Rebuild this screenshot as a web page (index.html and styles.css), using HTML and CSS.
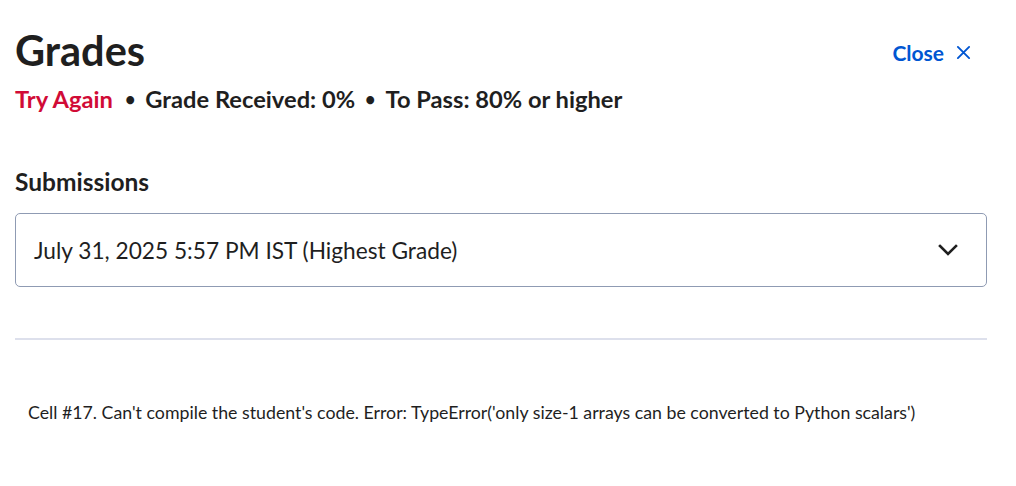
FILE: index.html
```html
<!DOCTYPE html>
<html>
<head>
<meta charset="utf-8">
<link rel="stylesheet" href="styles.css">
</head>
<body>
<div class="panel">
  <div class="header">
    <div>
      <h1 class="title">Grades</h1>
      <div class="status">
        <span class="fail">Try Again</span>
        <span class="dot">•</span>
        <span>Grade Received: 0%</span>
        <span class="dot">•</span>
        <span>To Pass: 80% or higher</span>
      </div>
    </div>
    <button class="close">Close
      <svg width="16" height="16" viewBox="0 0 16 16"><path d="M2 2 L14 14 M14 2 L2 14" stroke="#0056d2" stroke-width="2" fill="none" stroke-linecap="round"/></svg>
    </button>
  </div>
  <h2 class="label">Submissions</h2>
  <div class="select">
    <span>July 31, 2025 5:57 PM IST (Highest Grade)</span>
    <svg width="20" height="12" viewBox="0 0 20 12"><path d="M2 2 L10 10 L18 2" stroke="#1f1f1f" stroke-width="2.6" fill="none" stroke-linecap="square"/></svg>
  </div>
  <hr class="divider">
  <p class="feedback">Cell #17. Can't compile the student's code. Error: TypeError('only size-1 arrays can be converted to Python scalars')</p>
</div>
</body>
</html>
```
FILE: styles.css
```css
html, body {
  margin: 0;
  padding: 0;
  background: #fff;
}
body {
  font-family: "Lato", "Liberation Sans", sans-serif;
  color: #1f1f1f;
}
.panel {
  padding: 24px 29px 0 15px;
}
.header {
  display: flex;
  justify-content: space-between;
  align-items: flex-start;
}
.title {
  margin: 0;
  font-size: 41.5px;
  font-weight: 700;
  line-height: 52px;
  color: #1f1f1f;
}
.status {
  display: flex;
  align-items: center;
  gap: 10px;
  font-size: 23.7px;
  font-weight: 700;
  line-height: 30px;
  margin-top: 8px;
}
.status .fail {
  color: #d10b36;
  margin-right: 2px;
}
.status .dot {
  font-size: 18px;
}
.close {
  display: flex;
  align-items: center;
  gap: 12px;
  border: 0;
  background: none;
  padding: 0;
  margin-top: 16px;
  font-family: inherit;
  font-size: 21px;
  font-weight: 700;
  color: #0056d2;
  margin-right: 16px;
}
.close svg {
  width: 15px;
  height: 15px;
}
.label {
  margin: 53px 0 0;
  font-size: 24.5px;
  font-weight: 700;
  line-height: 30px;
}
.select {
  margin-top: 16px;
  height: 72px;
  border: 1px solid #8f9bb3;
  border-radius: 5px;
  display: flex;
  align-items: center;
  justify-content: space-between;
  padding: 0 28px 0 18px;
  font-size: 22.7px;
}
.divider {
  margin: 51px 0 0;
  border: 0;
  height: 2px;
  background: #dde0ec;
}
.feedback {
  margin: 60px 0 0 13px;
  font-size: 17.75px;
  line-height: 24px;
}
```
